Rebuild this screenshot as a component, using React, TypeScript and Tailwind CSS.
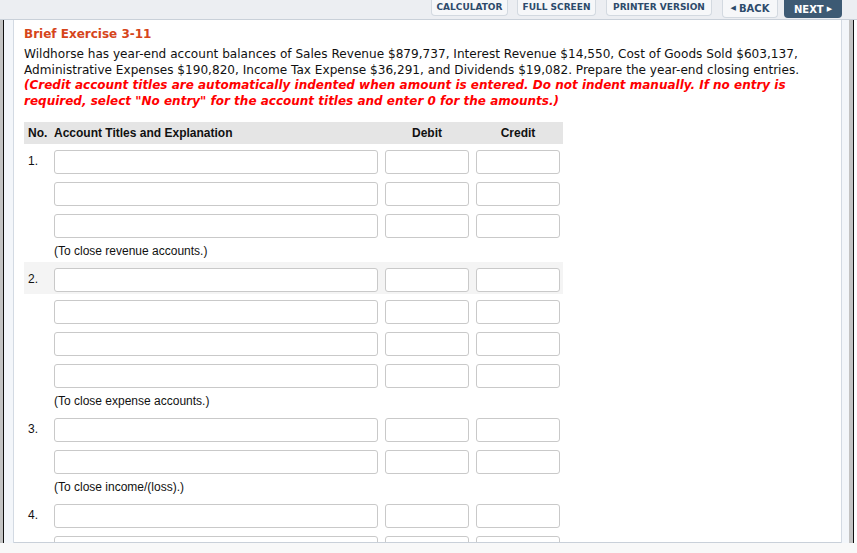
import React from "react";

const verdana = { fontFamily: '"DejaVu Sans", Verdana, sans-serif' };
const tahoma = { fontFamily: '"Liberation Sans", Tahoma, Arial, sans-serif' };

function Inputs() {
  return (
    <div className="flex gap-[7px] pt-[6px]">
      <div className="w-[324px] h-[24px] border border-[#c9c9c9] rounded-[3px] bg-white" />
      <div className="w-[84px] h-[24px] border border-[#c9c9c9] rounded-[3px] bg-white" />
      <div className="w-[84px] h-[24px] border border-[#c9c9c9] rounded-[3px] bg-white" />
    </div>
  );
}

function Row({ num, shaded }: { num?: string; shaded?: boolean }) {
  return (
    <div className={shaded ? "flex h-[32px] bg-[#f4f4f4]" : "flex h-[32px]"}>
      <div className="w-[30px] shrink-0 pl-[4px] pt-[10px] text-[12px] leading-[14px] text-[#111]" style={tahoma}>
        {num}
      </div>
      <Inputs />
    </div>
  );
}

function Note({ text }: { text: string }) {
  return (
    <div className="h-[22px] pl-[30px] pt-[3px] text-[12px] leading-[16px] text-[#111]" style={tahoma}>
      {text}
    </div>
  );
}

export default function App() {
  return (
    <div className="w-[857px] h-[553px] bg-white overflow-hidden flex flex-col">
      {/* top bar */}
      <div className="h-[20px] shrink-0 bg-[#eceef2] border-b border-[#c9d0d9] flex justify-end pr-[15px]">
        <div className="flex items-start">
          <div className="flex gap-[9px] items-start text-[9px] font-bold text-[#2d4a6b]" style={verdana}>
            <div className="w-[77px] h-[16px] flex items-center justify-center border border-t-0 border-[#d3d9e0] rounded-b-[4px] bg-[#f6f7f9]">
              CALCULATOR
            </div>
            <div className="w-[79px] h-[16px] flex items-center justify-center border border-t-0 border-[#d3d9e0] rounded-b-[4px] bg-[#f6f7f9]">
              FULL SCREEN
            </div>
            <div className="ml-px w-[106px] h-[16px] flex items-center justify-center border border-t-0 border-[#d3d9e0] rounded-b-[4px] bg-[#f6f7f9]">
              PRINTER VERSION
            </div>
          </div>
          <div
            className="ml-[10px] h-[18px] w-[56px] flex items-center justify-center gap-[3px] border border-t-0 border-[#d3d9e0] rounded-b-[4px] bg-[#f6f7f9] text-[10px] font-bold text-[#2d4a6b]"
            style={verdana}
          >
            <span className="text-[7px]">◀</span>
            <span>BACK</span>
          </div>
          <div
            className="ml-[6px] h-[18px] w-[58px] flex items-center justify-center gap-[3px] rounded-b-[4px] bg-[#3d5a74] text-[10px] font-bold text-white"
            style={verdana}
          >
            <span>NEXT</span>
            <span className="text-[7px]">▶</span>
          </div>
        </div>
      </div>

      {/* middle */}
      <div className="flex h-[523px] shrink-0">
        <div className="w-[3px] bg-[#c3c3c3]" />
        <div className="w-[1px] bg-[#111]" />
        <div className="w-[10px] bg-[#f3f6fa] border-r border-[#d3dae3]" />
        <div className="w-[827px] bg-white border-b border-[#c9d0d9] overflow-hidden pl-[10px] pt-[6px]">
          <div className="text-[12px] leading-[16px] font-bold text-[#d6451b] whitespace-nowrap" style={verdana}>
            Brief Exercise 3-11
          </div>
          <div className="mt-[5px] text-[12.1px] leading-[15.5px] text-[#111] whitespace-nowrap" style={verdana}>
            <div>
              Wildhorse has year-end account balances of Sales Revenue $879,737, Interest Revenue $14,550, Cost of Goods Sold $603,137,
            </div>
            <div>
              Administrative Expenses $190,820, Income Tax Expense $36,291, and Dividends $19,082. Prepare the year-end closing entries.
            </div>
            <div className="font-bold italic text-[12px] text-[#ff0000]">
              (Credit account titles are automatically indented when amount is entered. Do not indent manually. If no entry is
            </div>
            <div className="font-bold italic text-[12px] text-[#ff0000]">
              required, select "No entry" for the account titles and enter 0 for the amounts.)
            </div>
          </div>

          <div className="mt-[13px] w-[539px]">
            <div className="flex h-[22px] items-center bg-[#e5e5e5] text-[12px] font-bold text-[#111]" style={tahoma}>
              <div className="w-[30px] pl-[4px]">No.</div>
              <div className="w-[331px]">Account Titles and Explanation</div>
              <div className="w-[84px] text-center">Debit</div>
              <div className="w-[7px]" />
              <div className="w-[84px] text-center">Credit</div>
            </div>

            <Row num="1." />
            <Row />
            <Row />
            <Note text="(To close revenue accounts.)" />

            <Row num="2." shaded />
            <Row />
            <Row />
            <Row />
            <Note text="(To close expense accounts.)" />

            <Row num="3." />
            <Row />
            <Note text="(To close income/(loss).)" />

            <Row num="4." />
            <Row />
          </div>
        </div>
        <div className="w-[8px] bg-[#f3f6fa] border-l border-[#d3dae3]" />
        <div className="w-[4px] bg-[#c3c3c3]" />
        <div className="w-[1px] bg-[#111]" />
        <div className="w-[1px] bg-white" />
      </div>
      <div className="flex-1 bg-[#f8f8f8]" />
    </div>
  );
}
